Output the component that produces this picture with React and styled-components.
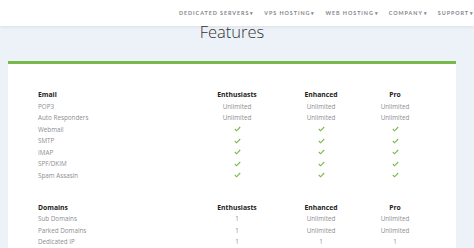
import React from 'react';
import styled, { createGlobalStyle } from 'styled-components';

const GlobalStyle = createGlobalStyle`
  html, body {
    margin: 0;
    padding: 0;
    background: #edf2f8;
    font-family: 'Open Sans', 'Noto Sans', sans-serif;
    overflow: hidden;
  }
`;

const Header = styled.header`
  height: 26px;
  background: #fff;
  box-shadow: 0 1px 3px rgba(0, 0, 0, 0.08);
  display: flex;
  justify-content: flex-end;
  align-items: center;
  position: relative;
  z-index: 1;
`;

const Nav = styled.nav`
  display: flex;
  gap: 10px;
`;

const NavItem = styled.span`
  font-family: 'Lato', sans-serif;
  font-size: 5.4px;
  font-weight: 700;
  letter-spacing: 0.95px;
  color: #85858b;
  white-space: nowrap;
`;

const Caret = styled.span`
  margin-left: 1px;
  font-size: 5px;
`;

const Main = styled.main`
  margin: 0 18px 0 8px;
  height: 222px;
  display: flex;
  flex-direction: column;
`;

const Title = styled.h1`
  margin: 0;
  flex: 0 0 35px;
  text-align: center;
  font-weight: 300;
  font-size: 16.5px;
  color: #333;
  line-height: 11px;
`;

const Card = styled.section`
  flex: 1;
  min-height: 0;
  overflow: hidden;
  background: #fff;
  border-top: 3px solid #79b84a;
  padding: 25px 0 0 30px;
`;

const Section = styled.div`
  display: grid;
  grid-template-columns: 157px 84px 84px 64px;
  grid-auto-rows: 11.5px;
  align-items: center;
  margin-bottom: 20.5px;
`;

const Cell = styled.div`
  font-size: ${p => (p.head ? '6.8px' : '6.3px')};
  color: ${p => (p.head ? '#222' : '#8e8e94')};
  font-weight: ${p => (p.head ? 700 : 400)};
  white-space: nowrap;
  display: flex;
  justify-content: ${p => (p.left ? 'flex-start' : 'center')};
  align-items: center;
`;

const Check = () => (
  <svg width="7" height="6" viewBox="0 0 7 6">
    <polyline points="0.8,3 2.6,4.8 6.2,1" fill="none" stroke="#79b84a" strokeWidth="1.1" />
  </svg>
);

const sections = [
  {
    title: 'Email',
    rows: [
      ['POP3', 'Unlimited', 'Unlimited', 'Unlimited'],
      ['Auto Responders', 'Unlimited', 'Unlimited', 'Unlimited'],
      ['Webmail', true, true, true],
      ['SMTP', true, true, true],
      ['IMAP', true, true, true],
      ['SPF/DKIM', true, true, true],
      ['Spam Assasin', true, true, true]
    ]
  },
  {
    title: 'Domains',
    rows: [
      ['Sub Domains', '1', 'Unlimited', 'Unlimited'],
      ['Parked Domains', '1', 'Unlimited', 'Unlimited'],
      ['Dedicated IP', '1', '1', '1']
    ]
  }
];

const plans = ['Enthusiasts', 'Enhanced', 'Pro'];
const navItems = ['DEDICATED SERVERS', 'VPS HOSTING', 'WEB HOSTING', 'COMPANY', 'SUPPORT'];

export default function App() {
  return (
    <>
      <GlobalStyle />
      <Header>
        <Nav>
          {navItems.map(item => (
            <NavItem key={item}>
              {item}
              <Caret>▾</Caret>
            </NavItem>
          ))}
        </Nav>
      </Header>
      <Main>
        <Title>Features</Title>
        <Card>
          {sections.map(section => (
            <Section key={section.title}>
              <Cell head left>{section.title}</Cell>
              {plans.map(plan => (
                <Cell head key={plan}>{plan}</Cell>
              ))}
              {section.rows.map(row =>
                row.map((value, i) => (
                  <Cell key={row[0] + i} left={i === 0}>
                    {value === true ? <Check /> : value}
                  </Cell>
                ))
              )}
            </Section>
          ))}
        </Card>
      </Main>
    </>
  );
}
